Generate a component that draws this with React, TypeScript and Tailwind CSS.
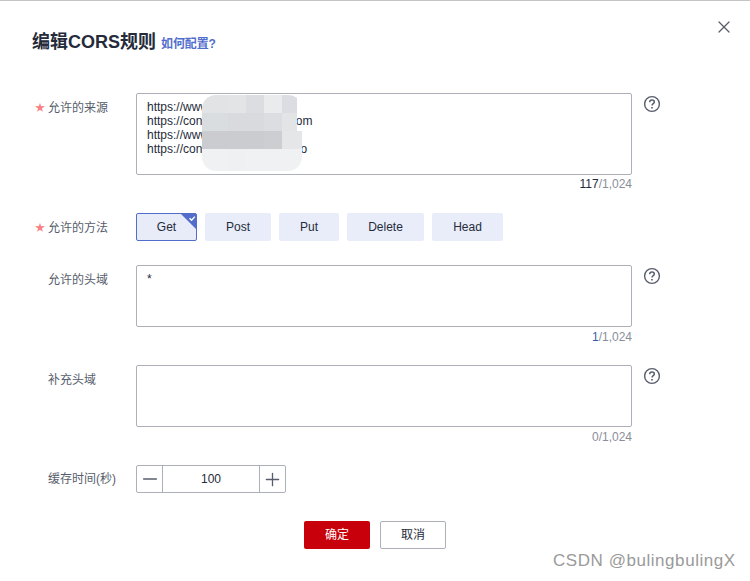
import { Minus, Plus, X } from 'lucide-react';

const font = 'font-["Liberation_Sans","Noto_Sans_CJK_SC",sans-serif]';

const methods = [
  { name: 'Get', width: 'w-[61px]', active: true },
  { name: 'Post', width: 'w-[66px]', active: false },
  { name: 'Put', width: 'w-[60px]', active: false },
  { name: 'Delete', width: 'w-[77px]', active: false },
  { name: 'Head', width: 'w-[71px]', active: false },
];

const mosaic = [
  ['#e2e3e5', '#e3e4e6', '#dcdde1', '#eaebec', '#dcdde3', 'transparent'],
  ['#dadde0', '#d9dadd', '#d9dadd', '#dcdde0', '#e3e4e6', 'transparent'],
  ['#cbccd0', '#cbccd0', '#cbccd0', '#cdced2', '#e5e6e8', '#e5e6e8'],
  ['#f0f1f2', '#eff0f1', '#f0f1f2', '#f0f1f2', '#f0f1f2', '#f0f1f2'],
];

function HelpIcon() {
  return (
    <svg width="18" height="18" viewBox="0 0 18 18" fill="none" stroke="#575d6c" className="block">
      <circle cx="9" cy="9" r="7.4" strokeWidth="1.4" />
      <path d="M6.7 7.2c0-1.4 1-2.2 2.3-2.2s2.3.8 2.3 2c0 1.7-2.3 1.7-2.3 3.6" strokeWidth="1.5" />
      <path d="M9 12.1v1.4" strokeWidth="1.6" />
    </svg>
  );
}

function Label({ text, required }: { text: string; required?: boolean }) {
  return (
    <div className="relative w-[136px] shrink-0 pl-[48px] text-[12px] leading-[18px] text-[#575d6c]">
      {required && (
        <span className="absolute left-[35px] top-0 text-[10px] leading-[18px] text-[#f98181]">★</span>
      )}
      {text}
    </div>
  );
}

function Counter({ count, color, className }: { count: string; color: string; className: string }) {
  return (
    <div className={`w-[496px] text-right text-[12px] leading-[18px] text-[#8a8e99] ${className}`}>
      <span className={color}>{count}</span>/1,024
    </div>
  );
}

export default function App() {
  return (
    <div className={`relative h-[581px] w-[750px] overflow-hidden border-t border-[#c4c4c4] bg-white ${font}`}>
      <button className="absolute right-[16px] top-[16px] text-[#575d6c]">
        <X size={20} strokeWidth={1.5} />
      </button>

      <div className="mt-[29px] flex h-[24px] items-center gap-[5px] pl-[32px]">
        <h1 className="text-[18px] font-bold leading-[24px] text-[#252b3a]">编辑CORS规则</h1>
        <a className="mt-[3px] text-[12px] font-bold tracking-[-0.1px] text-[#526ecc]">如何配置?</a>
      </div>

      <div className="mt-[39px] flex flex-col">
        <div className="flex">
          <div className="pt-[6px]">
            <Label text="允许的来源" required />
          </div>
          <div className="relative">
            <div className="h-[82px] w-[496px] rounded-[2px] border border-[#adb0b8] pb-[5px] pl-[10px] pt-[6px] text-[12px] leading-[14px] text-[#252b3a]">
              <div>https://www.example-ai.com</div>
              <div>https://console.example-ai.com</div>
              <div>https://www.example-ai.com</div>
              <div>https://console.example-ai.pro</div>
            </div>
            <div className="absolute left-[66px] top-[2px] grid grid-cols-[26px_18px_18px_18px_15px_5px] grid-rows-[18px_18px_18px_22px] overflow-hidden rounded-[14px]">
              {mosaic.flat().map((color, i) => (
                <div key={i} style={{ backgroundColor: color }} />
              ))}
            </div>
            <Counter count="117" color="text-[#252b3a]" className="mt-[0px]" />
          </div>
          <div className="ml-[11px] mt-[2px]">
            <HelpIcon />
          </div>
        </div>

        <div className="mt-[20px] flex">
          <div className="flex h-[28px] items-center pt-px">
            <Label text="允许的方法" required />
          </div>
          <div className="flex gap-[8px]">
            {methods.map(m => (
              <button
                key={m.name}
                className={`relative h-[28px] ${m.width} rounded-[2px] text-[12px] text-[#252b3a] ${
                  m.active ? 'border border-[#526ecc] bg-[#e8ecf9]' : 'bg-[#e9edfa]'
                }`}
              >
                {m.name}
                {m.active && (
                  <svg width="17" height="17" viewBox="0 0 17 17" className="absolute -right-px -top-px">
                    <path d="M0 0H15L17 2V17Z" fill="#526ecc" />
                    <path d="M9.5 5.2L11.6 7.2L14.8 3.6" fill="none" stroke="#fff" strokeWidth="1.4" />
                  </svg>
                )}
              </button>
            ))}
          </div>
        </div>

        <div className="mt-[24px] flex">
          <div className="pt-[6px]">
            <Label text="允许的头域" />
          </div>
          <div>
            <div className="h-[62px] w-[496px] rounded-[2px] border border-[#adb0b8] pb-[5px] pl-[10px] pt-[6px] text-[12px] leading-[14px] text-[#252b3a]">
              *
            </div>
            <Counter count="1" color="text-[#2f5fa8]" className="mt-px" />
          </div>
          <div className="ml-[11px] mt-[2px]">
            <HelpIcon />
          </div>
        </div>

        <div className="mt-[19px] flex">
          <div className="pt-[6px]">
            <Label text="补充头域" />
          </div>
          <div>
            <div className="h-[62px] w-[496px] rounded-[2px] border border-[#adb0b8]" />
            <Counter count="0" color="text-[#8a8e99]" className="mt-px" />
          </div>
          <div className="ml-[11px] mt-[2px]">
            <HelpIcon />
          </div>
        </div>

        <div className="mt-[19px] flex items-center">
          <Label text="缓存时间(秒)" />
          <div className="flex h-[28px] w-[150px] rounded-[2px] border border-[#adb0b8] text-[#575d6c]">
            <div className="flex w-[26px] items-center justify-center border-r border-[#adb0b8]">
              <Minus size={22} strokeWidth={1.4} />
            </div>
            <div className="flex flex-1 items-center justify-center text-[12px] text-[#252b3a]">100</div>
            <div className="flex w-[26px] items-center justify-center border-l border-[#adb0b8]">
              <Plus size={21} strokeWidth={1.5} />
            </div>
          </div>
        </div>

        <div className="mt-[28px] flex justify-center gap-[10px]">
          <button className="h-[28px] w-[66px] rounded-[2px] bg-[#c7000b] text-[12px] text-white">确定</button>
          <button className="h-[28px] w-[66px] rounded-[2px] border border-[#adb0b8] text-[12px] text-[#252b3a]">
            取消
          </button>
        </div>
      </div>

      <div className="absolute left-[553px] top-[550px] text-[17px] leading-[20px] tracking-[0.55px] text-[#9a9a9a]">
        CSDN @bulingbulingX
      </div>
    </div>
  );
}
